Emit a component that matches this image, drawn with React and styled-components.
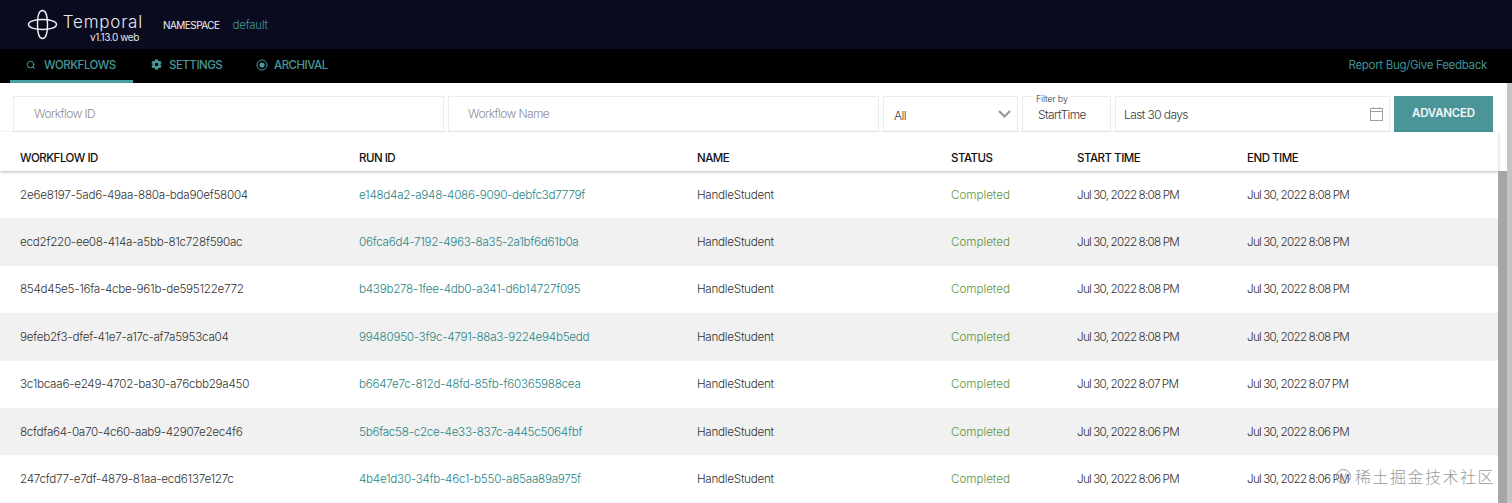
import React from "react";
import styled, { createGlobalStyle } from "styled-components";
import { FaCog } from "react-icons/fa";
import { Search } from "lucide-react";

const rows = [
  ["2e6e8197-5ad6-49aa-880a-bda90ef58004", "e148d4a2-a948-4086-9090-debfc3d7779f", "8:08 PM"],
  ["ecd2f220-ee08-414a-a5bb-81c728f590ac", "06fca6d4-7192-4963-8a35-2a1bf6d61b0a", "8:08 PM"],
  ["854d45e5-16fa-4cbe-961b-de595122e772", "b439b278-1fee-4db0-a341-d6b14727f095", "8:08 PM"],
  ["9efeb2f3-dfef-41e7-a17c-af7a5953ca04", "99480950-3f9c-4791-88a3-9224e94b5edd", "8:08 PM"],
  ["3c1bcaa6-e249-4702-ba30-a76cbb29a450", "b6647e7c-812d-48fd-85fb-f60365988cea", "8:07 PM"],
  ["8cfdfa64-0a70-4c60-aab9-42907e2ec4f6", "5b6fac58-c2ce-4e33-837c-a445c5064fbf", "8:06 PM"],
  ["247cfd77-e7df-4879-81aa-ecd6137e127c", "4b4e1d30-34fb-46c1-b550-a85aa89a975f", "8:06 PM"],
];

const GlobalStyle = createGlobalStyle`
  html, body {
    margin: 0;
    height: 503px;
    overflow: hidden;
    background: #fff;
    font-family: "Inter", "Liberation Sans", sans-serif;
  }
`;

const Page = styled.div`
  position: relative;
  width: 1512px;
  height: 503px;
  overflow: hidden;
`;

const Header = styled.header`
  display: flex;
  align-items: center;
  height: 49px;
  padding-left: 27px;
  background: #0b0b20;
  color: #fff;
`;

const Brand = styled.div`
  display: flex;
  flex-direction: column;
  align-items: flex-end;
  margin: 5px 0 0 8px;
  width: 77px;
`;

const BrandName = styled.div`
  font-size: 17px;
  font-weight: 300;
  letter-spacing: 0.8px;
  line-height: 19px;
  color: #e8e8ec;
`;

const Version = styled.div`
  font-size: 10px;
  letter-spacing: -0.4px;
  line-height: 10px;
  margin-right: 4px;
  color: #e4e4e8;
`;

const NamespaceLabel = styled.span`
  margin-left: 20px;
  font-size: 10px;
  letter-spacing: -0.55px;
  color: #f0f0f2;
`;

const NamespaceValue = styled.span`
  margin-left: 13px;
  font-size: 11.5px;
  font-weight: 300;
  letter-spacing: -0.2px;
  color: #43999b;
`;

const Nav = styled.nav`
  display: flex;
  align-items: stretch;
  height: 34px;
  background: #000;
  padding: 0 25px 0 10px;
`;

const Tab = styled.div`
  display: flex;
  align-items: center;
  gap: ${(p) => p.$gap}px;
  width: ${(p) => p.$width}px;
  padding-left: ${(p) => p.$pad}px;
  box-sizing: border-box;
  border-bottom: 3px solid ${(p) => (p.$active ? "#4b9ea0" : "transparent")};
  color: #46989a;
  font-size: 11.5px;
  font-weight: 500;
  letter-spacing: -0.5px;
`;

const FeedbackLink = styled.a`
  margin-left: auto;
  align-self: center;
  margin-top: -3px;
  color: #3f9294;
  font-size: 11.5px;
  font-weight: 400;
  letter-spacing: -0.3px;
`;

const Filters = styled.div`
  display: flex;
  gap: 4px;
  padding: 13px 19px 0 13px;
  height: 36px;
`;

const Field = styled.div`
  position: relative;
  display: flex;
  align-items: center;
  justify-content: space-between;
  box-sizing: border-box;
  width: ${(p) => p.$width}px;
  height: 36px;
  padding: 0 ${(p) => p.$right || 0}px ${(p) => (p.$muted ? 2 : 0)}px ${(p) => p.$left}px;
  border: 1px solid #ececec;
  font-size: 12px;
  font-weight: 300;
  color: ${(p) => (p.$muted ? "#8f8f8f" : "#3a3a3a")};
  letter-spacing: -0.6px;
`;

const SelectValue = styled.span`
  padding-top: 3px;
`;

const FloatLabel = styled.span`
  position: absolute;
  top: -4px;
  left: 10px;
  padding: 0 3px;
  background: #fff;
  color: #333;
  font-size: 9px;
  line-height: 12px;
  letter-spacing: -0.2px;
`;

const AdvancedButton = styled.button`
  width: 99px;
  height: 36px;
  border: 0;
  padding: 0 0 3px;
  background: #4b9498;
  color: #f2f8f8;
  font: 600 11.5px "Inter", "Liberation Sans", sans-serif;
  letter-spacing: -0.2px;
`;

const Table = styled.div`
  position: relative;
  width: 1498px;
`;

const Grid = styled.div`
  display: grid;
  grid-template-columns: 339px 338px 254px 126px 170px 1fr;
  align-items: center;
  padding-left: 20px;
`;

const HeadRow = styled(Grid)`
  height: 39px;
  padding-top: 13px;
  box-sizing: border-box;
  box-shadow: 0 1px 3px rgba(0, 0, 0, 0.28);
  position: relative;
  color: #111;
  font-size: 11.5px;
  font-weight: 500;
  letter-spacing: -0.5px;
`;

const Row = styled(Grid)`
  height: 47.4px;
  background: ${(p) => (p.$odd ? "#f1f1f1" : "#fff")};
  font-size: 11.7px;
  font-weight: 300;
  letter-spacing: -0.28px;
  color: #333;
`;

const RunLink = styled.a`
  color: #2a8586;
`;

const Status = styled.span`
  color: #5f9340;
  letter-spacing: -0.05px;
`;

const TimeCell = styled.span`
  letter-spacing: -0.7px;
  word-spacing: -0.5px;
`;

const ScrollTrack = styled.div`
  position: absolute;
  top: 83px;
  right: 0;
  bottom: 0;
  width: 5px;
  background: #c4c4c4;
`;

const Scrollbar = styled.div`
  position: absolute;
  top: 171px;
  right: 5px;
  bottom: 0;
  width: 9px;
  background: #a6a6a6;
`;

const Watermark = styled.div`
  position: absolute;
  right: 17px;
  bottom: 15px;
  display: flex;
  align-items: center;
  gap: 4px;
  color: #9a9a9a;
  font-family: "Noto Sans CJK SC", sans-serif;
  font-size: 16px;
  font-weight: 300;
  letter-spacing: 1.5px;
`;

const WatermarkMark = styled.span`
  display: inline-flex;
  align-items: center;
  justify-content: center;
  width: 13px;
  height: 13px;
  border: 1px solid #9a9a9a;
  border-radius: 50%;
  font-size: 9px;
  letter-spacing: 0;
`;

const Logo = () => (
  <svg width="31" height="31" viewBox="0 0 31 31" fill="none" stroke="#f2f2f4" strokeWidth="1.4">
    <path d="M15.5 1.5c-3.4 0-5 6-5 14s1.6 14 5 14 5-6 5-14-1.6-14-5-14z" />
    <path d="M1.5 15.5c0-3 6-5 14-5s14 2 14 5-6 5-14 5-14-2-14-5z" />
  </svg>
);

const Archival = () => (
  <svg width="12" height="12" viewBox="0 0 12 12" fill="none" stroke="#46989a">
    <circle cx="6" cy="6" r="5" strokeWidth="1" />
    <circle cx="6" cy="6" r="2.6" fill="#46989a" strokeWidth="0" />
  </svg>
);

const Calendar = () => (
  <svg width="13" height="14" viewBox="0 0 13 14" fill="none" stroke="#a0a0a0" strokeWidth="1">
    <rect x="0.5" y="1.5" width="12" height="12" />
    <path d="M0.5 4.5h12M3.5 0v2M9.5 0v2" />
  </svg>
);

const Chevron = () => (
  <svg width="13" height="8" viewBox="0 0 13 8" fill="none" stroke="#9a9a9a" strokeWidth="2.2">
    <path d="M1 1l5.5 5.5L12 1" />
  </svg>
);

const App = () => (
  <Page>
    <GlobalStyle />
    <Header>
      <Logo />
      <Brand>
        <BrandName>Temporal</BrandName>
        <Version>v1.13.0 web</Version>
      </Brand>
      <NamespaceLabel>NAMESPACE</NamespaceLabel>
      <NamespaceValue>default</NamespaceValue>
    </Header>
    <Nav>
      <Tab $active $width={123} $pad={16} $gap={8}>
        <Search size={10} strokeWidth={2.4} />
        WORKFLOWS
      </Tab>
      <Tab $width={123} $pad={18} $gap={7}>
        <FaCog size={11} />
        SETTINGS
      </Tab>
      <Tab $width={123} $pad={0} $gap={6}>
        <Archival />
        ARCHIVAL
      </Tab>
      <FeedbackLink>Report Bug/Give Feedback</FeedbackLink>
    </Nav>
    <Filters>
      <Field $width={431} $left={20} $muted>Workflow ID</Field>
      <Field $width={431} $left={19} $muted>Workflow Name</Field>
      <Field $width={135} $left={10} $right={6}>
        <SelectValue>All</SelectValue>
        <Chevron />
      </Field>
      <Field $width={89} $left={15}>
        <FloatLabel>Filter by</FloatLabel>
        StartTime
      </Field>
      <Field $width={275} $left={8} $right={6}>
        Last 30 days
        <Calendar />
      </Field>
      <AdvancedButton>ADVANCED</AdvancedButton>
    </Filters>
    <Table>
      <HeadRow>
        <span>WORKFLOW ID</span>
        <span>RUN ID</span>
        <span>NAME</span>
        <span>STATUS</span>
        <span>START TIME</span>
        <span>END TIME</span>
      </HeadRow>
      {rows.map((row, i) => (
        <Row key={row[0]} $odd={i % 2 === 1}>
          <span>{row[0]}</span>
          <RunLink>{row[1]}</RunLink>
          <span>HandleStudent</span>
          <Status>Completed</Status>
          <TimeCell>Jul 30, 2022 {row[2]}</TimeCell>
          <TimeCell>Jul 30, 2022 {row[2]}</TimeCell>
        </Row>
      ))}
    </Table>
    <ScrollTrack />
    <Scrollbar />
    <Watermark>
      <WatermarkMark>M</WatermarkMark>
      稀土掘金技术社区
    </Watermark>
  </Page>
);

export default App;
